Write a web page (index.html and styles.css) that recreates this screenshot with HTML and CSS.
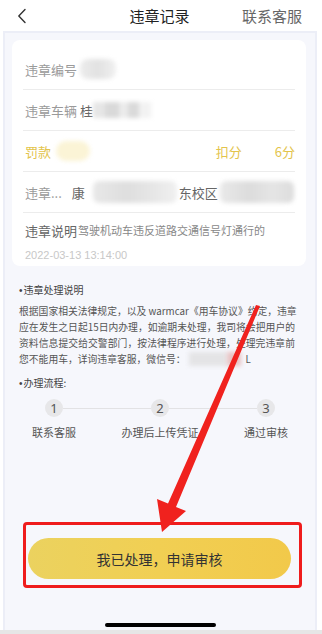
FILE: index.html
```html
<!DOCTYPE html>
<html lang="zh-CN">
<head>
<meta charset="utf-8">
<title>违章记录</title>
<link rel="stylesheet" href="styles.css">
</head>
<body>
<div class="screen">
  <header class="nav">
    <span class="nav-back"><svg width="10" height="16" viewBox="0 0 10 16"><path d="M8 1.5 L1.8 8 L8 14.5" fill="none" stroke="#333" stroke-width="1.4" stroke-linecap="round" stroke-linejoin="round"/></svg></span>
    <h1 class="nav-title">违章记录</h1>
    <span class="nav-action">联系客服</span>
  </header>
  <main class="panel">
    <section class="card">
      <div class="row"><span class="label">违章编号</span><span class="blur blur-id"></span></div>
      <div class="row"><span class="label">违章车辆</span><span class="value">桂</span><span class="blur blur-car"></span></div>
      <div class="row row-fine"><span class="label label-fine">罚款</span><span class="blur blur-fine"></span><span class="spacer"></span><span class="fine-item">扣分</span><span class="fine-item fine-points">6分</span></div>
      <div class="row"><span class="label label-short">违章...</span><span class="value">康</span><span class="blur blur-addr1"></span><span class="value">东校区</span><span class="blur blur-addr2"></span></div>
      <div class="row row-desc"><span class="label label-dark">违章说明</span><span class="desc">驾驶机动车违反道路交通信号灯通行的</span></div>
      <div class="date">2022-03-13 13:14:00</div>
    </section>
    <section class="notes">
      <h2 class="notes-title"><span class="bullet">•</span>违章处理说明</h2>
      <p class="para">
        <span class="para-line">根据国家相关法律规定，以及 warmcar《用车协议》约定，违章</span>
        <span class="para-line">应在发生之日起15日内办理，如逾期未处理，我司将会把用户的</span>
        <span class="para-line">资料信息提交给交警部门，按法律程序进行处理，处理完违章前</span>
        <span class="para-line para-last">您不能用车，详询违章客服，微信号：<span class="blur blur-wx"></span><span class="blur blur-wx2"></span>L</span>
      </p>
      <h2 class="notes-title notes-flow"><span class="bullet">•</span>办理流程:</h2>
    </section>
    <ol class="steps">
      <li class="step"><span class="step-num">1</span><span class="step-label">联系客服</span></li>
      <li class="step"><span class="step-num">2</span><span class="step-label">办理后上传凭证</span></li>
      <li class="step"><span class="step-num">3</span><span class="step-label">通过审核</span></li>
    </ol>
    <div class="highlight">
      <button class="submit" type="button">我已处理，申请审核</button>
    </div>
    <div class="home-indicator"></div>
  </main>
  <div class="bottom-strip"></div>
</div>
<svg class="annotation" width="322" height="634" viewBox="0 0 322 634">
  <polygon points="256,305 260,306 176,507 186,511 162,532 157,499 168,503.5" fill="#f0221e"/>
</svg>
</body>
</html>
```
FILE: styles.css
```css
* { box-sizing: border-box; margin: 0; padding: 0; }
html, body { width: 322px; height: 634px; overflow: hidden; background: #fff; }
body {
  font-family: "Noto Sans CJK SC", "Noto Sans", sans-serif;
  color: #333;
  position: relative;
}
.screen { display: flex; flex-direction: column; height: 634px; }

.nav {
  height: 31px;
  display: grid;
  grid-template-columns: 1fr auto 1fr;
  align-items: center;
  padding: 0 20px 0 17px;
}
.nav-back { display: flex; align-items: center; }
.nav-title { font-size: 15px; font-weight: 400; color: #222; line-height: 1; }
.nav-action { justify-self: end; font-size: 15px; color: #666; line-height: 1; }

.panel {
  height: 599px;
  width: 314px;
  margin-left: 3px;
  border: 2px solid #eceef7;
  border-bottom: none;
  background: #f6f7fc;
  display: flex;
  flex-direction: column;
}
.bottom-strip { height: 4px; background: #e6e6e6; }

.card {
  margin: 7px 0 0 7px;
  width: 294px;
  background: #fff;
  border-radius: 8px;
  padding: 9px 11px 3px;
}
.row {
  height: 41px;
  display: flex;
  align-items: center;
  border-bottom: 1px solid #ececec;
  padding-left: 2px;
  font-size: 13px;
  white-space: nowrap;
}
.label { color: #9a9a9a; margin-right: 3px; }
.label-short { margin-right: 10px; }
.label-dark { color: #666; margin-right: 1px; }
.label-fine { color: #e3c44c; margin-right: 5px; }
.value { color: #666; }
.spacer { flex: 1; }
.fine-item { color: #e3c44c; }
.fine-points { margin-left: 33px; }

.blur { display: inline-block; filter: blur(2px); }
.blur-id { width: 36px; height: 20px; background: linear-gradient(90deg, #ececec, #e2e2e2 50%, #f0f0f0); border-radius: 8px; }
.blur-car { width: 58px; height: 16px; background: linear-gradient(90deg, #e6e6e6 0 20%, #d9d9d9 20% 45%, #ebebeb 45% 60%, #dadada 60% 80%, #f2f2f2 80%); }
.blur-fine { width: 34px; height: 20px; background: #fbf4d6; border-radius: 10px; }
.blur-addr1 { width: 84px; height: 22px; margin: 0 2px 0 8px; background: linear-gradient(90deg, #e8e8e8, #dedede 40%, #e6e6e6 70%, #f0f0f0); border-radius: 6px; }
.blur-addr2 { width: 74px; height: 22px; margin-left: 2px; background: linear-gradient(90deg, #e9e9e9, #dcdcdc 40%, #e5e5e5 70%, #dddddd); border-radius: 6px; }

.row-desc { height: 34px; border-bottom: none; }
.desc { font-size: 11px; color: #888; }
.date { font-size: 11px; line-height: 16px; color: #c8c8c8; padding-left: 2px; font-family: "Liberation Sans", sans-serif; }

.notes { padding-left: 14px; color: #555; font-size: 9.8px; }
.notes-title { font-size: 10px; font-weight: 400; color: #444; line-height: 16px; margin-top: 16px; }
.bullet { font-family: "Liberation Sans", sans-serif; font-size: 10px; margin-right: 1px; }
.notes-flow { margin-top: 8px; }
.para { margin-top: 4px; line-height: 16px; }
.para-line { display: block; width: 276px; white-space: nowrap; text-align: justify; text-align-last: justify; }
.para-line.para-last { text-align: left; text-align-last: left; display: flex; align-items: center; }
.blur-wx { width: 38px; height: 14px; margin-left: 3px; background: #e4e4e6; }
.blur-wx2 { width: 14px; height: 14px; margin-right: 5px; background: #e8c2c2; }

.steps {
  list-style: none;
  width: 318px;
  margin: 7px 0 0 -4px;
  display: grid;
  grid-template-columns: repeat(3, 1fr);
}
.step { position: relative; display: flex; flex-direction: column; align-items: center; }
.step:not(:last-child)::after {
  content: "";
  position: absolute;
  top: 9px;
  left: calc(50% + 9px);
  width: calc(100% - 18px);
  height: 1px;
  background: #e2e2e4;
}
.step-num {
  width: 18px; height: 18px;
  border-radius: 50%;
  background: #e7e7e9;
  color: #555;
  font-size: 13px;
  line-height: 18px;
  text-align: center;
  font-family: "Noto Sans", sans-serif;
}
.step-label { margin-top: 8px; font-size: 11px; line-height: 14px; color: #555; }

.highlight {
  margin: auto 0 0 18px;
  width: 279px;
  height: 66px;
  border: 3px solid #ef1c1c;
  border-radius: 4px;
  padding: 10px 8px 3px 2px;
  display: flex;
  align-items: flex-end;
}
.submit {
  width: 100%;
  height: 41px;
  border: none;
  border-radius: 21px;
  background: linear-gradient(90deg, #ebd25f, #f1cf53 50%, #f2c94a);
  font-family: "Noto Sans CJK SC", sans-serif;
  font-size: 14px;
  color: #333;
  margin-bottom: 3px;
}
.home-indicator {
  align-self: center;
  width: 111px;
  height: 4px;
  border-radius: 2px;
  background: #000;
  margin: 35px 0 3px;
}

.annotation { position: absolute; top: 0; left: 0; pointer-events: none; }
```
